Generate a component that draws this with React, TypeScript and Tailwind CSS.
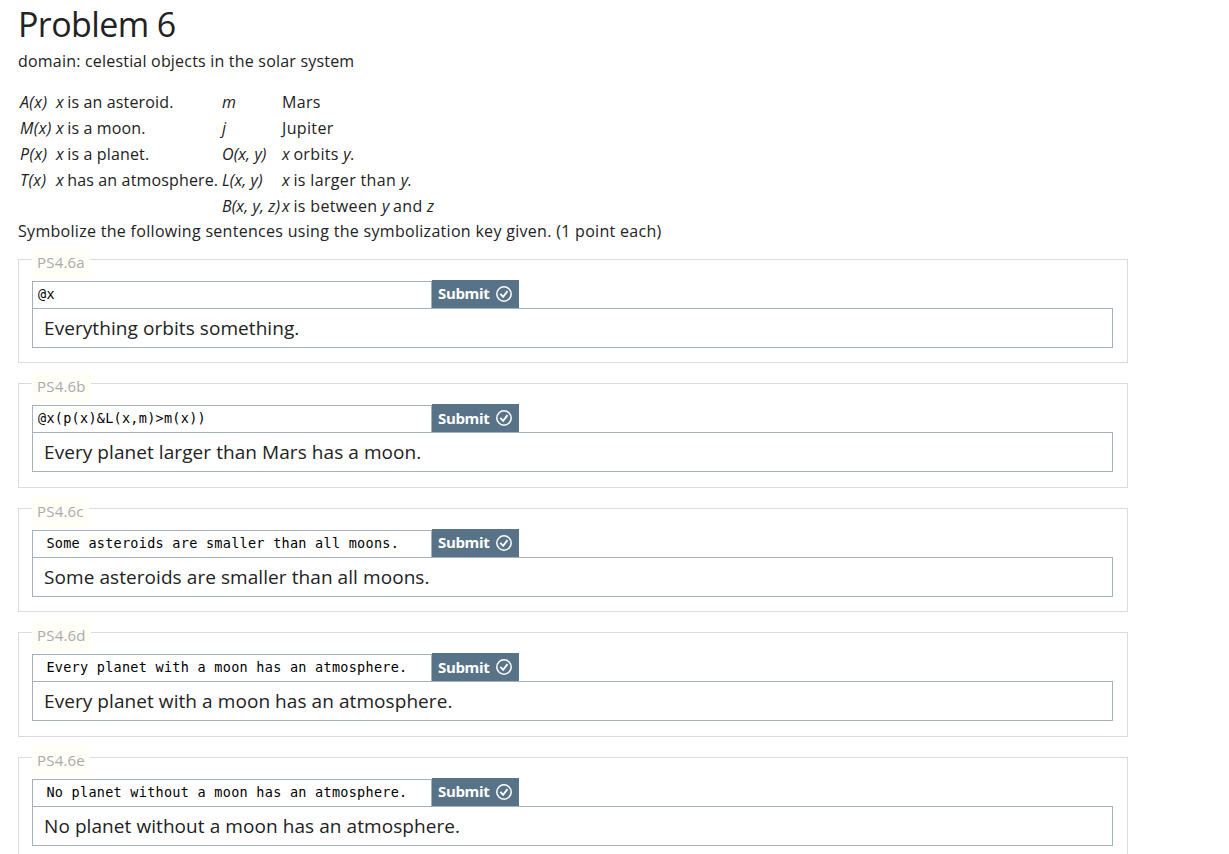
import { useState } from "react";

const keyRows = [
  { a: "A(x)", aText: ["x", " is an asteroid."], b: "m", bText: ["", "Mars"] },
  { a: "M(x)", aText: ["x", " is a moon."], b: "j", bText: ["", "Jupiter"] },
  { a: "P(x)", aText: ["x", " is a planet."], b: "O(x, y)", bText: ["x", " orbits ", "y", "."] },
  { a: "T(x)", aText: ["x", " has an atmosphere."], b: "L(x, y)", bText: ["x", " is larger than ", "y", "."] },
  { a: "", aText: [], b: "B(x, y, z)", bText: ["x", " is between ", "y", " and ", "z"] },
];

const problems = [
  { id: "PS4.6a", answer: "@x", sentence: "Everything orbits something." },
  { id: "PS4.6b", answer: "@x(p(x)&L(x,m)>m(x))", sentence: "Every planet larger than Mars has a moon." },
  { id: "PS4.6c", answer: " Some asteroids are smaller than all moons.", sentence: "Some asteroids are smaller than all moons." },
  { id: "PS4.6d", answer: " Every planet with a moon has an atmosphere.", sentence: "Every planet with a moon has an atmosphere." },
  { id: "PS4.6e", answer: " No planet without a moon has an atmosphere.", sentence: "No planet without a moon has an atmosphere." },
];

// even entries are variables, odd entries are plain words
function Phrase({ parts }: { parts: string[] }) {
  return (
    <span className="whitespace-pre">
      {parts.map((part, i) =>
        i % 2 === 0 ? (
          <i key={i} className="tracking-[-0.8px]">
            {part}
          </i>
        ) : (
          <span key={i}>{part}</span>
        ),
      )}
    </span>
  );
}

function CheckIcon() {
  return (
    <svg width="16" height="16" viewBox="0 0 16 16" fill="none" stroke="currentColor">
      <circle cx="8" cy="8" r="7.2" strokeWidth="1.5" />
      <path d="M4.3 7.8 7.1 10.8l4.4-5.7" strokeWidth="1.8" />
    </svg>
  );
}

function Problem({ id, answer, sentence }: { id: string; answer: string; sentence: string }) {
  const [value, setValue] = useState(answer);

  return (
    <section className="h-[104.4px] w-[1110px] border border-[#dbdbdb] px-[13px]">
      <div className="-mt-3 flex h-[33px]">
        <span className="h-[31px] bg-[#fffff8] px-[5px] text-[15px] leading-[29px] tracking-[0.2px] text-[#aaa]">
          {id}
        </span>
      </div>
      <div className="-mt-px flex h-7 items-end">
        <input
          className="h-[27px] w-[400px] border border-b-0 border-[#a3b1bf] bg-white px-[5px] pb-0.5 font-['DejaVu_Sans_Mono',monospace] text-[13.5px] tracking-[0.27px] text-black outline-none"
          value={value}
          onChange={(e) => setValue(e.target.value)}
          spellCheck={false}
        />
        <button className="flex h-7 w-[87px] items-center justify-between bg-[#587387] pr-[7px] pl-1.5 text-[15px] font-bold tracking-[-0.35px] text-white">
          <span className="pb-px">Submit</span>
          <CheckIcon />
        </button>
      </div>
      <div className="h-10 w-[1081px] border border-[#a3b1bf] pl-[11px] text-[19px] leading-[38px] tracking-[0.07px] text-[#222]">
        {sentence}
      </div>
    </section>
  );
}

export default function App() {
  return (
    <main className="h-[854px] overflow-hidden bg-white pl-[18px] font-['Open_Sans','Noto_Sans',sans-serif] text-base text-[#222]">
      <h1 className="h-12 text-[34px] leading-[48px] font-normal tracking-[-0.6px]">Problem 6</h1>
      <p className="h-[26px] leading-[26px] tracking-[0.2px]">domain: celestial objects in the solar system</p>
      <div className="mt-[15px] pl-0.5">
        {keyRows.map((row) => (
          <div
            key={row.b}
            className="grid h-[26px] grid-cols-[36px_166px_60px_auto] leading-[26px] tracking-[0.15px] whitespace-nowrap"
          >
            <i className="tracking-[0.4px]">{row.a}</i>
            <Phrase parts={row.aText} />
            <i className="tracking-[0.1px]">{row.b}</i>
            <div className="tracking-[0.35px]">
              <Phrase parts={row.bText} />
            </div>
          </div>
        ))}
      </div>
      <p className="h-[26px] leading-[25px] tracking-[0.3px]">
        Symbolize the following sentences using the symbolization key given. (1 point each)
      </p>
      <div className="mt-[14px] flex flex-col gap-[20.05px]">
        {problems.map((problem) => (
          <Problem key={problem.id} {...problem} />
        ))}
      </div>
    </main>
  );
}
